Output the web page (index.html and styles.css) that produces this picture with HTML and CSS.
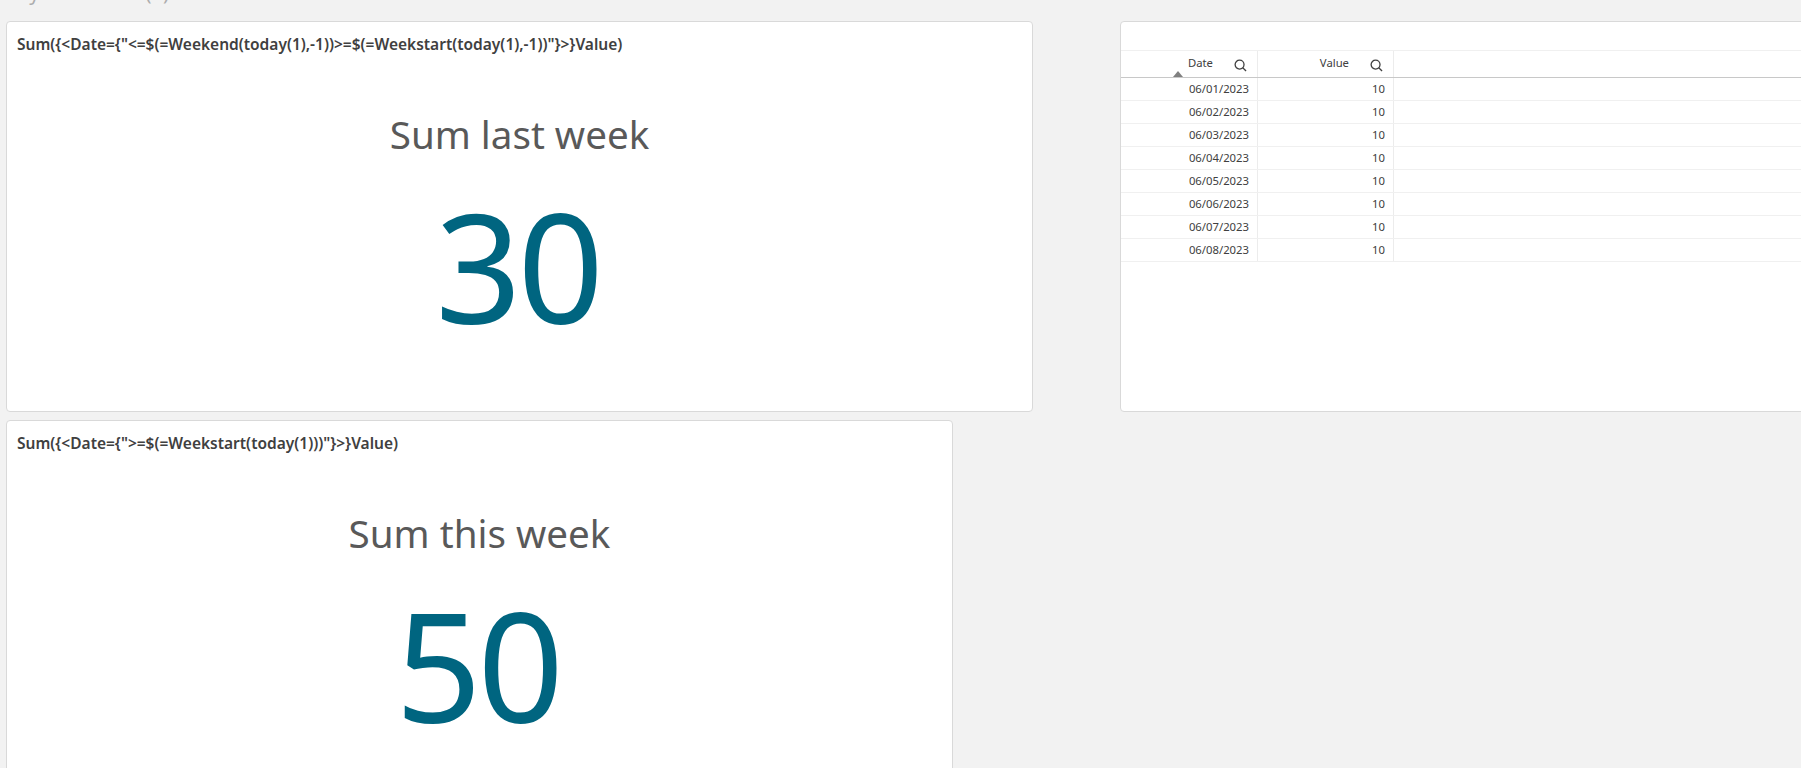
FILE: index.html
```html
<!DOCTYPE html>
<html lang="en">
<head>
<meta charset="utf-8">
<title>My new sheet (1)</title>
<link rel="stylesheet" href="styles.css">
</head>
<body>
<div class="sheet-title"><span class="sheet-name">My new sheet (1)</span></div>
<main class="grid">
  <section class="card kpi-a">
    <h2 class="card-title">Sum({&lt;Date={"&lt;=$(=Weekend(today(1),-1))&gt;=$(=Weekstart(today(1),-1))"}&gt;}Value)</h2>
    <div class="kpi">
      <div class="kpi-label">Sum last week</div>
      <div class="kpi-value">30</div>
    </div>
  </section>
  <section class="card table-card">
    <div class="table-top"></div>
    <div class="row head">
      <div class="cell date"><svg class="sort" viewBox="0 0 10 6"><path d="M5 0 10 6H0z"/></svg><span class="head-label">Date</span><svg class="search" viewBox="0 0 14 14"><circle cx="6" cy="6" r="4.8"/><path d="M9.4 9.4 13 13"/></svg></div>
      <div class="cell value"><span class="head-label">Value</span><svg class="search" viewBox="0 0 14 14"><circle cx="6" cy="6" r="4.8"/><path d="M9.4 9.4 13 13"/></svg></div>
      <div class="cell rest"></div>
    </div>
    <div class="row"><div class="cell date">06/01/2023</div><div class="cell value">10</div><div class="cell rest"></div></div>
    <div class="row"><div class="cell date">06/02/2023</div><div class="cell value">10</div><div class="cell rest"></div></div>
    <div class="row"><div class="cell date">06/03/2023</div><div class="cell value">10</div><div class="cell rest"></div></div>
    <div class="row"><div class="cell date">06/04/2023</div><div class="cell value">10</div><div class="cell rest"></div></div>
    <div class="row"><div class="cell date">06/05/2023</div><div class="cell value">10</div><div class="cell rest"></div></div>
    <div class="row"><div class="cell date">06/06/2023</div><div class="cell value">10</div><div class="cell rest"></div></div>
    <div class="row"><div class="cell date">06/07/2023</div><div class="cell value">10</div><div class="cell rest"></div></div>
    <div class="row"><div class="cell date">06/08/2023</div><div class="cell value">10</div><div class="cell rest"></div></div>
  </section>
  <section class="card kpi-b">
    <h2 class="card-title">Sum({&lt;Date={"&gt;=$(=Weekstart(today(1)))"}&gt;}Value)</h2>
    <div class="kpi">
      <div class="kpi-label">Sum this week</div>
      <div class="kpi-value">50</div>
    </div>
  </section>
</main>
</body>
</html>
```
FILE: styles.css
```css
* { box-sizing: border-box; }
html, body { margin: 0; height: 100%; overflow: hidden; }
body { background: #f2f2f2; font-family: "Noto Sans", "Open Sans", sans-serif; color: #404040; width: 1801px; height: 768px; }
.sheet-title { height: 21px; padding-left: 11px; font-size: 20px; color: #adadad; overflow: hidden; }
.sheet-name { display: block; line-height: 20px; margin-top: -17px; }
.grid { display: grid; grid-template-columns: 947px 80px 1fr; grid-template-rows: 391px 1fr; row-gap: 8px; padding-left: 6px; height: 747px; width: 1801px; overflow: hidden; }
.card { background: #fff; border: 1px solid #d9d9d9; border-radius: 4px; overflow: hidden; }
.kpi-a { grid-column: 1 / 3; }
.table-card { grid-column: 3; margin-left: 87px; margin-right: -8px; }
.kpi-b { grid-column: 1; grid-row: 2; margin-bottom: -8px; }
.card-title { margin: 0; padding: 13px 10px 0; font-size: 15.5px; line-height: 18px; font-weight: 600; color: #404040; white-space: nowrap; }
.kpi { text-align: center; color: #595959; }
.kpi-label { font-size: 38.6px; line-height: 44px; margin-top: 59px; font-weight: 400; }
.kpi-value { font-size: 151px; line-height: 150px; margin-top: 34px; padding-right: 4px; letter-spacing: -4px; color: #006580; font-weight: 400; }
.table-top { height: 28px; }
.row { display: flex; height: 23px; border-bottom: 1px solid #f0f0f0; font-size: 11.3px; color: #404040; }
.row.head { height: 28px; border-top: 1px solid #f0f0f0; border-bottom: 1px solid #c8c8c8; }
.cell { display: flex; align-items: center; justify-content: flex-end; border-right: 1px solid #ececec; padding: 0 8px 1px 0; }
.cell.date { width: 137px; }
.cell.value { width: 136px; }
.cell.rest { flex: 1; border-right: 0; }
.head .cell { position: relative; padding-bottom: 3px; }
.head-label { margin-right: 36px; }
.search { position: absolute; right: 10px; top: 8px; width: 13px; height: 13px; fill: none; stroke: #404040; stroke-width: 1.4; }
.sort { position: absolute; left: 52px; bottom: 0; width: 10px; height: 6px; fill: #808080; }
```
